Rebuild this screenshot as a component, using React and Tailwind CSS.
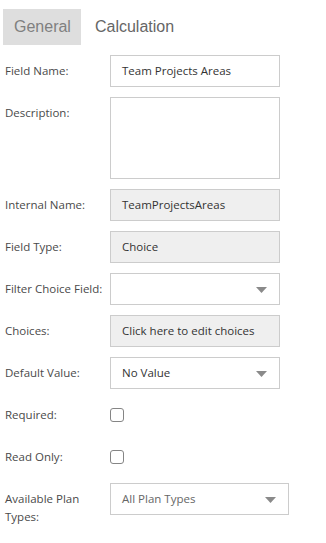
import React from "react";

const labelCls = "w-[110px] shrink-0 pl-[5px] pt-[7px] text-[11.5px] leading-[18px] text-[#4a4a4a]";
const boxBase = "h-[32px] w-[170px] border border-[#ccc] pl-[11px] flex items-center text-[11.5px] text-[#333]";

function Caret() {
  return (
    <svg width="11" height="6" viewBox="0 0 11 6" className="absolute right-[12px] top-[13px]">
      <path d="M0 0 L11 0 L5.5 6 Z" fill="#8a8a8a" />
    </svg>
  );
}

function Row({ label, children }) {
  return (
    <div className="flex mb-[10px]">
      <div className={labelCls}>{label}</div>
      {children}
    </div>
  );
}

function Check() {
  return (
    <div className="h-[32px] flex items-center">
      <span className="block w-[14px] h-[14px] rounded-[3px] border border-[#858585] bg-white" />
    </div>
  );
}

export default function App() {
  return (
    <div className="w-[326px] h-[543px] bg-white font-['Open_Sans','Noto_Sans',sans-serif]">
      <div className="pt-[9px] pl-[3px] flex font-['Liberation_Sans',Arial,sans-serif]">
        <div className="h-[36px] pl-[11px] pr-[10px] flex items-center bg-[#dedede] text-[16px] text-[#808080]">General</div>
        <div className="h-[36px] pl-[14px] pr-[10px] flex items-center text-[16px] text-[#666]">Calculation</div>
      </div>
      <div className="mt-[10px]">
        <Row label="Field Name:">
          <div className={boxBase + " bg-white"}>Team Projects Areas</div>
        </Row>
        <Row label="Description:">
          <div className="h-[82px] w-[170px] border border-[#ccc] bg-white" />
        </Row>
        <Row label="Internal Name:">
          <div className={boxBase + " bg-[#efefef]"}>TeamProjectsAreas</div>
        </Row>
        <Row label="Field Type:">
          <div className={boxBase + " bg-[#efefef]"}>Choice</div>
        </Row>
        <Row label="Filter Choice Field:">
          <div className={boxBase + " bg-white relative"}>
            <Caret />
          </div>
        </Row>
        <Row label="Choices:">
          <div className={boxBase + " bg-[#efefef]"}>Click here to edit choices</div>
        </Row>
        <Row label="Default Value:">
          <div className={boxBase + " bg-white relative"}>
            No Value
            <Caret />
          </div>
        </Row>
        <Row label="Required:">
          <Check />
        </Row>
        <Row label="Read Only:">
          <Check />
        </Row>
        <Row label={<>Available Plan<br />Types:</>}>
          <div className="h-[32px] w-[179px] border border-[#ccc] pl-[11px] flex items-center text-[11.5px] text-[#666] bg-white relative">
            All Plan Types
            <Caret />
          </div>
        </Row>
      </div>
    </div>
  );
}
